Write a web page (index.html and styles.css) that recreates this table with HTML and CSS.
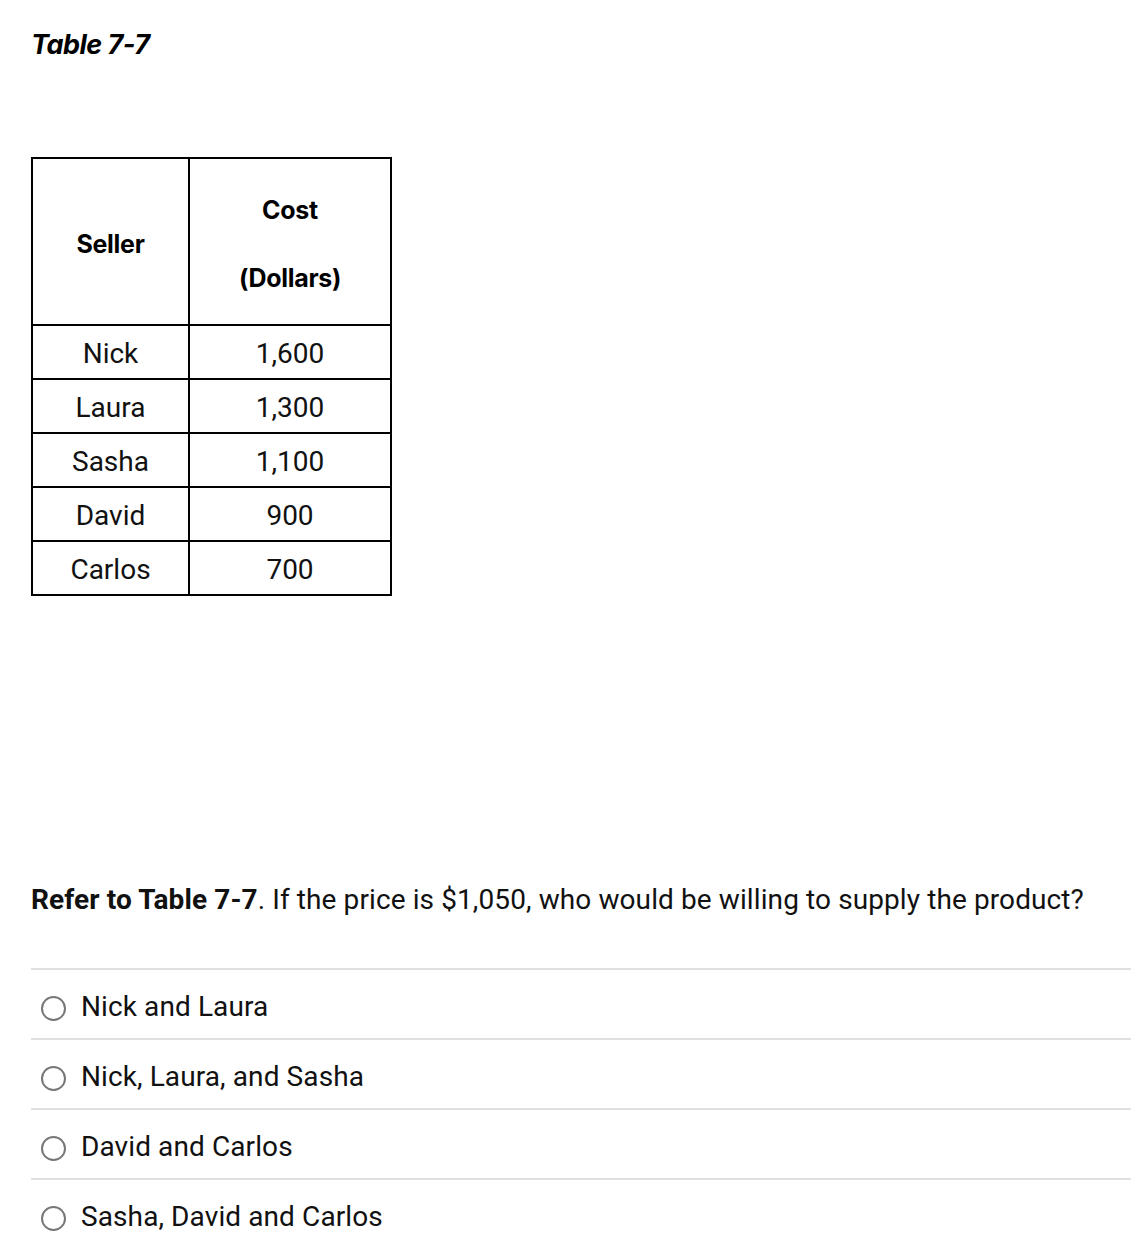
FILE: index.html
```html
<!DOCTYPE html>
<html>
<head>
<meta charset="utf-8">
<link rel="stylesheet" href="styles.css">
</head>
<body>
<div class="page">
  <h2 class="title">Table 7-7</h2>
  <table class="data">
    <tr class="head">
      <th class="c1">Seller</th>
      <th class="c2"><div class="line">Cost</div><div class="line">(Dollars)</div></th>
    </tr>
    <tr><td>Nick</td><td>1,600</td></tr>
    <tr><td>Laura</td><td>1,300</td></tr>
    <tr><td>Sasha</td><td>1,100</td></tr>
    <tr><td>David</td><td>900</td></tr>
    <tr><td>Carlos</td><td>700</td></tr>
  </table>
  <p class="question"><strong>Refer to Table 7-7</strong>. If the price is $1,050, who would be willing to supply the product?</p>
  <div class="answers">
    <label class="answer"><span class="radio"></span><span class="text">Nick and Laura</span></label>
    <label class="answer"><span class="radio"></span><span class="text">Nick, Laura, and Sasha</span></label>
    <label class="answer"><span class="radio"></span><span class="text">David and Carlos</span></label>
    <label class="answer"><span class="radio"></span><span class="text">Sasha, David and Carlos</span></label>
  </div>
</div>
</body>
</html>
```
FILE: styles.css
```css
html, body {
  margin: 0;
  padding: 0;
  background: #fff;
}
body {
  font-family: Roboto, "Liberation Sans", sans-serif;
  color: #111;
}
.page {
  padding: 0 0 0 31px;
}
.title {
  margin: 0;
  padding-top: 29px;
  font-family: Inter, Roboto, sans-serif;
  font-size: 27px;
  line-height: 32px;
  font-weight: 700;
  font-style: italic;
  letter-spacing: -0.5px;
  color: #000;
}
.data {
  margin-top: 96px;
  border-collapse: collapse;
  border: 2px solid #000;
}
.data th, .data td {
  border: 2px solid #000;
  text-align: center;
  padding: 0;
}
.data th {
  font-family: Inter, Roboto, sans-serif;
  font-size: 25px;
  font-weight: 700;
  letter-spacing: -0.3px;
  color: #000;
  padding-top: 4px;
}
.head {
  height: 167px;
}
.c1 { width: 155px; }
.c2 { width: 200px; }
.line {
  line-height: 34px;
}
.line + .line {
  margin-top: 34px;
}
.data td {
  height: 49px;
  font-size: 28px;
  font-weight: 400;
  padding-top: 3px;
}
.question {
  margin: 286px 0 0;
  font-size: 28px;
  line-height: 36px;
  letter-spacing: 0.1px;
}
.question strong {
  font-weight: 700;
}
.answers {
  margin-top: 50px;
}
.answer {
  display: flex;
  align-items: center;
  height: 63px;
  border-top: 2px solid #e0e0e0;
  padding-top: 5px;
}
.radio {
  flex: none;
  width: 25px;
  height: 25px;
  border: 2px solid #777;
  border-radius: 50%;
  margin: 4px 15px 0 10px;
  box-sizing: border-box;
}
.text {
  font-size: 28px;
  letter-spacing: 0.1px;
}
```
